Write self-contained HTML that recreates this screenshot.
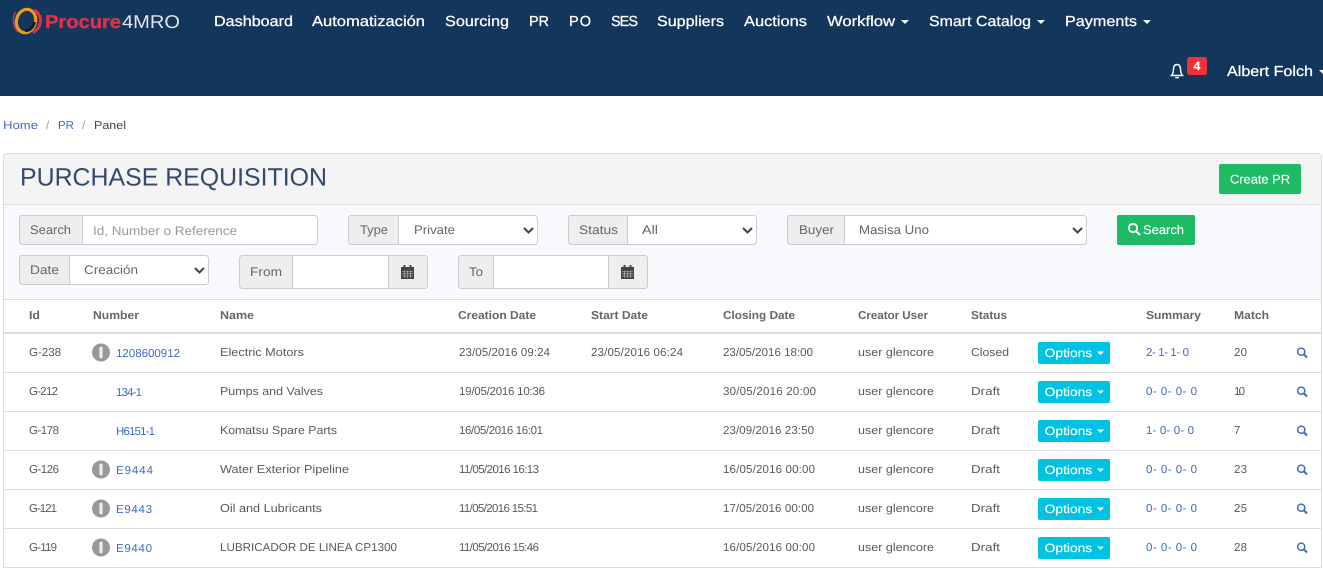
<!DOCTYPE html>
<html lang="en"><head><meta charset="utf-8"><title>Purchase Requisition</title>
<style>
html,body{margin:0;padding:0;background:#fff;width:1323px;height:568px;overflow:hidden}
svg{display:block}
text{font-family:"Liberation Sans",sans-serif;font-size:11.5px;fill:#5a5a5a;text-rendering:geometricPrecision}
.n{font-size:14.5px;fill:#fff;stroke:#fff;stroke-width:.25}
.h{font-weight:bold;fill:#666}
.a{fill:#4169c4}
.f{font-size:12.5px;fill:#666}
.w{fill:#fff;font-size:12.5px;stroke:#fff;stroke-width:.15}
.b{fill:#eee;stroke:#ccc}
.i{fill:#fff;stroke:#ccc}
</style></head><body>
<svg xmlns="http://www.w3.org/2000/svg" width="1323" height="568" viewBox="0 0 1323 568">
<defs>
<g id="mag" fill="none" stroke="#4169c4" stroke-width="1.5"><circle cx="4.2" cy="4.2" r="3.6"/><path d="M7 7L10 10" stroke-width="2"/></g>
<g id="chev" fill="none" stroke="#444" stroke-width="2"><path d="M0 0L4.500 4.500L9 0"/></g>
<g id="cal"><rect x="0" y="2" width="13" height="12" fill="#444"/><rect x="2.500" y="0" width="2" height="3" fill="#444"/><rect x="8.500" y="0" width="2" height="3" fill="#444"/><path d="M1 6.500H12M1 8.800H12M1 11H12M3.500 5.500V13M6.500 5.500V13M9.500 5.500V13" stroke="#bbb" stroke-width=".6"/></g>
<g id="info"><circle cx="0" cy="0" r="9" fill="#999"/><rect x="-1.600" y="-5.800" width="3.200" height="11.600" rx="1" fill="#eee"/></g>
<g id="opt"><rect width="72" height="22" rx="2" fill="#00c3e3"/><text x="6.700" y="15" textLength="47.500" lengthAdjust="spacingAndGlyphs" class="w" style="font-size:12px">Options</text><path d="M59 9.500h7l-3.500 3.500z" fill="#fff"/></g>
</defs>

<!-- top nav -->
<rect width="1323" height="96" fill="#13375c"/>
<g fill="none">
<ellipse cx="26" cy="21" rx="9.500" ry="11.800" stroke="#f09a1a" stroke-width="3.200" transform="rotate(15 26 21)"/>
<path d="M34 10C42.500 14 43 27 33 32.500" stroke="#e0304a" stroke-width="3"/>
<path d="M15.500 12C12 18 13 28 18 32" stroke="#c0354a" stroke-width="1.500"/>
<path d="M25 30.500C30 31 33.500 27 34.500 22" stroke="#0b1c33" stroke-width="3"/>
</g>
<text x="45" y="28" textLength="76" lengthAdjust="spacingAndGlyphs" style="font-size:18.500px;font-weight:bold;fill:#e0304a;stroke:#e0304a;stroke-width:.4">Procure</text>
<text x="122" y="28" textLength="58" lengthAdjust="spacingAndGlyphs" style="font-size:18.500px;fill:#dfe5ec">4MRO</text>

<text class="n" x="214" y="26" textLength="79" lengthAdjust="spacingAndGlyphs">Dashboard</text>
<text class="n" x="312" y="26" textLength="113" lengthAdjust="spacingAndGlyphs">Automatización</text>
<text class="n" x="445" y="26" textLength="64" lengthAdjust="spacingAndGlyphs">Sourcing</text>
<text class="n" x="529" y="26" textLength="20">PR</text>
<text class="n" x="569" y="26" textLength="22">PO</text>
<text class="n" x="611" y="26" textLength="27">SES</text>
<text class="n" x="657" y="26" textLength="67" lengthAdjust="spacingAndGlyphs">Suppliers</text>
<text class="n" x="744" y="26" textLength="63" lengthAdjust="spacingAndGlyphs">Auctions</text>
<text class="n" x="827" y="26" textLength="68" lengthAdjust="spacingAndGlyphs">Workflow</text>
<path d="M901 20h8l-4 4z" fill="#fff"/>
<text class="n" x="929" y="26" textLength="102" lengthAdjust="spacingAndGlyphs">Smart Catalog</text>
<path d="M1037 20h8l-4 4z" fill="#fff"/>
<text class="n" x="1065" y="26" textLength="72" lengthAdjust="spacingAndGlyphs">Payments</text>
<path d="M1143 20h8l-4 4z" fill="#fff"/>

<path d="M1170.500 75.500H1183.500M1172 75C1173.700 72.500 1173.300 70.500 1173.500 68.500C1173.800 65.300 1175.300 64.500 1177 64.500C1178.700 64.500 1180.200 65.300 1180.500 68.500C1180.700 70.500 1180.300 72.500 1182 75M1175.300 77.700H1178.700" fill="none" stroke="#fff" stroke-width="1.400"/>
<rect x="1187" y="57" width="20" height="18" rx="2.500" fill="#ee3238"/>
<text x="1197" y="70" text-anchor="middle" style="font-size:12px;font-weight:bold;fill:#fff;stroke:#fff;stroke-width:.3">4</text>
<text class="n" x="1227" y="76" textLength="86" lengthAdjust="spacingAndGlyphs">Albert Folch</text>
<path d="M1319 70h8l-4 4z" fill="#fff"/>

<!-- breadcrumb -->
<text class="a" x="3" y="129" textLength="35" lengthAdjust="spacingAndGlyphs">Home</text>
<text x="46" y="129" style="fill:#999">/</text>
<text class="a" x="58" y="129" textLength="16" lengthAdjust="spacingAndGlyphs">PR</text>
<text x="82" y="129" style="fill:#999">/</text>
<text x="94" y="129" textLength="32" lengthAdjust="spacingAndGlyphs" style="fill:#444">Panel</text>

<!-- card -->
<path d="M3.500 568V157a3.500 3.500 0 0 1 3.500-3.500H1318a3.500 3.500 0 0 1 3.500 3.500V568" fill="#fff" stroke="#ddd"/>
<path d="M4 204V157a3 3 0 0 1 3-3H1318a3 3 0 0 1 3 3V204z" fill="#f4f4f4"/>
<rect x="4" y="204" width="1317" height="1" fill="#ddd"/>
<rect x="4" y="205" width="1317" height="94" fill="#f8f9fd"/>
<rect x="4" y="299" width="1317" height="1" fill="#ddd"/>
<text x="20" y="185.500" textLength="307" lengthAdjust="spacingAndGlyphs" style="font-size:25px;fill:#34496e">PURCHASE REQUISITION</text>
<rect x="1219" y="164" width="82" height="30" rx="2" fill="#1dbb63"/>
<text class="w" x="1230" y="183.500" textLength="60" lengthAdjust="spacingAndGlyphs">Create PR</text>

<!-- filters row 1 -->
<rect class="i" x="19.500" y="215.500" width="298" height="29" rx="3"/>
<path class="b" d="M82.500 215.500H22.500a3 3 0 0 0-3 3V241.500a3 3 0 0 0 3 3H82.500z"/>
<text class="f" x="30" y="234" textLength="41" lengthAdjust="spacingAndGlyphs">Search</text>
<text class="f" x="93" y="235" textLength="144" lengthAdjust="spacingAndGlyphs" style="fill:#999">Id, Number o Reference</text>

<rect class="i" x="348.500" y="215.500" width="189" height="29" rx="3"/>
<path class="b" d="M398.500 215.500H351.500a3 3 0 0 0-3 3V241.500a3 3 0 0 0 3 3H398.500z"/>
<text class="f" x="360" y="234" textLength="28" lengthAdjust="spacingAndGlyphs">Type</text>
<text class="f" x="414" y="234" textLength="41" lengthAdjust="spacingAndGlyphs">Private</text>
<use href="#chev" x="524" y="228"/>

<rect class="i" x="568.500" y="215.500" width="188" height="29" rx="3"/>
<path class="b" d="M627.500 215.500H571.500a3 3 0 0 0-3 3V241.500a3 3 0 0 0 3 3H627.500z"/>
<text class="f" x="579" y="234" textLength="39" lengthAdjust="spacingAndGlyphs">Status</text>
<text class="f" x="642" y="234" textLength="16" lengthAdjust="spacingAndGlyphs">All</text>
<use href="#chev" x="743" y="228"/>

<rect class="i" x="787.500" y="215.500" width="299" height="29" rx="3"/>
<path class="b" d="M844.500 215.500H790.500a3 3 0 0 0-3 3V241.500a3 3 0 0 0 3 3H844.500z"/>
<text class="f" x="799" y="234" textLength="35" lengthAdjust="spacingAndGlyphs">Buyer</text>
<text class="f" x="859" y="234" textLength="70" lengthAdjust="spacingAndGlyphs">Masisa Uno</text>
<use href="#chev" x="1073" y="228"/>

<rect x="1117" y="215" width="78" height="30" rx="2" fill="#1dbb63"/>
<g fill="none" stroke="#fff"><circle cx="1133" cy="228" r="4.200" stroke-width="1.800"/><path d="M1136 231.200L1140 235" stroke-width="2.200"/></g>
<text class="w" x="1143" y="234" textLength="41" lengthAdjust="spacingAndGlyphs">Search</text>

<!-- filters row 2 -->
<rect class="i" x="19.500" y="255.500" width="189" height="29" rx="3"/>
<path class="b" d="M69.500 255.500H22.500a3 3 0 0 0-3 3V281.500a3 3 0 0 0 3 3H69.500z"/>
<text class="f" x="30" y="274" textLength="29" lengthAdjust="spacingAndGlyphs">Date</text>
<text class="f" x="84" y="274" textLength="54" lengthAdjust="spacingAndGlyphs">Creación</text>
<use href="#chev" x="195" y="268"/>

<rect class="b" x="239.500" y="255.500" width="188" height="33" rx="3"/>
<rect class="i" x="292.500" y="255.500" width="96" height="33"/>
<text class="f" x="250" y="276" textLength="32" lengthAdjust="spacingAndGlyphs">From</text>
<use href="#cal" x="401" y="265"/>

<rect class="b" x="458.500" y="255.500" width="189" height="33" rx="3"/>
<rect class="i" x="493.500" y="255.500" width="115" height="33"/>
<text class="f" x="469" y="276" textLength="14" lengthAdjust="spacingAndGlyphs">To</text>
<use href="#cal" x="621" y="265"/>

<!-- table head -->
<g>
<text class="h" x="29" y="319" textLength="11" lengthAdjust="spacingAndGlyphs">Id</text>
<text class="h" x="93" y="319" textLength="46" lengthAdjust="spacingAndGlyphs">Number</text>
<text class="h" x="220" y="319" textLength="34" lengthAdjust="spacingAndGlyphs">Name</text>
<text class="h" x="458" y="319" textLength="78" lengthAdjust="spacingAndGlyphs">Creation Date</text>
<text class="h" x="591" y="319" textLength="57" lengthAdjust="spacingAndGlyphs">Start Date</text>
<text class="h" x="723" y="319" textLength="72" lengthAdjust="spacingAndGlyphs">Closing Date</text>
<text class="h" x="858" y="319" textLength="70" lengthAdjust="spacingAndGlyphs">Creator User</text>
<text class="h" x="971" y="319" textLength="36" lengthAdjust="spacingAndGlyphs">Status</text>
<text class="h" x="1146" y="319" textLength="55" lengthAdjust="spacingAndGlyphs">Summary</text>
<text class="h" x="1234" y="319" textLength="35" lengthAdjust="spacingAndGlyphs">Match</text>
</g>
<rect x="4" y="332" width="1317" height="2" fill="#ddd"/>
<rect x="4" y="372" width="1317" height="1" fill="#ddd"/>
<rect x="4" y="411" width="1317" height="1" fill="#ddd"/>
<rect x="4" y="450" width="1317" height="1" fill="#ddd"/>
<rect x="4" y="489" width="1317" height="1" fill="#ddd"/>
<rect x="4" y="528" width="1317" height="1" fill="#ddd"/>
<rect x="4" y="567" width="1317" height="1" fill="#ddd"/>

<!-- row 1 -->
<text x="29" y="356" textLength="32">G-238</text>
<use href="#info" x="101" y="352.500"/>
<text class="a" x="116" y="357" textLength="64">1208600912</text>
<text x="220" y="356" textLength="84" lengthAdjust="spacingAndGlyphs">Electric Motors</text>
<text x="459" y="356" textLength="91">23/05/2016 09:24</text>
<text x="591" y="356" textLength="92">23/05/2016 06:24</text>
<text x="723" y="356" textLength="90">23/05/2016 18:00</text>
<text x="858" y="356" textLength="76" lengthAdjust="spacingAndGlyphs">user glencore</text>
<text x="971" y="356" textLength="38" lengthAdjust="spacingAndGlyphs">Closed</text>
<use href="#opt" x="1038" y="342"/>
<text class="a" x="1146" y="356" textLength="43">2- 1- 1- 0</text>
<text x="1234" y="356" textLength="13">20</text>
<use href="#mag" x="1297" y="347.500"/>

<!-- row 2 -->
<text x="29" y="395" textLength="29">G-212</text>
<text class="a" x="116" y="396" textLength="26">134-1</text>
<text x="220" y="395" textLength="103" lengthAdjust="spacingAndGlyphs">Pumps and Valves</text>
<text x="459" y="395" textLength="86">19/05/2016 10:36</text>
<text x="723" y="395" textLength="93">30/05/2016 20:00</text>
<text x="858" y="395" textLength="76" lengthAdjust="spacingAndGlyphs">user glencore</text>
<text x="971" y="395" textLength="29" lengthAdjust="spacingAndGlyphs">Draft</text>
<use href="#opt" x="1038" y="381"/>
<text class="a" x="1146" y="395" textLength="51">0- 0- 0- 0</text>
<text x="1234" y="395" textLength="11">10</text>
<use href="#mag" x="1297" y="386.500"/>

<!-- row 3 -->
<text x="29" y="434" textLength="30">G-178</text>
<text class="a" x="116" y="435" textLength="39">H6151-1</text>
<text x="220" y="434" textLength="117" lengthAdjust="spacingAndGlyphs">Komatsu Spare Parts</text>
<text x="459" y="434" textLength="84">16/05/2016 16:01</text>
<text x="723" y="434" textLength="91">23/09/2016 23:50</text>
<text x="858" y="434" textLength="76" lengthAdjust="spacingAndGlyphs">user glencore</text>
<text x="971" y="434" textLength="29" lengthAdjust="spacingAndGlyphs">Draft</text>
<use href="#opt" x="1038" y="420"/>
<text class="a" x="1146" y="434" textLength="48">1- 0- 0- 0</text>
<text x="1234" y="434" textLength="6">7</text>
<use href="#mag" x="1297" y="425.500"/>

<!-- row 4 -->
<text x="29" y="473" textLength="30">G-126</text>
<use href="#info" x="101" y="469.500"/>
<text class="a" x="116" y="474" textLength="37">E9444</text>
<text x="220" y="473" textLength="129" lengthAdjust="spacingAndGlyphs">Water Exterior Pipeline</text>
<text x="459" y="473" textLength="80">11/05/2016 16:13</text>
<text x="723" y="473" textLength="92">16/05/2016 00:00</text>
<text x="858" y="473" textLength="76" lengthAdjust="spacingAndGlyphs">user glencore</text>
<text x="971" y="473" textLength="29" lengthAdjust="spacingAndGlyphs">Draft</text>
<use href="#opt" x="1038" y="459"/>
<text class="a" x="1146" y="473" textLength="51">0- 0- 0- 0</text>
<text x="1234" y="473" textLength="13">23</text>
<use href="#mag" x="1297" y="464.500"/>

<!-- row 5 -->
<text x="29" y="512" textLength="28">G-121</text>
<use href="#info" x="101" y="508.500"/>
<text class="a" x="116" y="513" textLength="36">E9443</text>
<text x="220" y="512" textLength="102" lengthAdjust="spacingAndGlyphs">Oil and Lubricants</text>
<text x="459" y="512" textLength="79">11/05/2016 15:51</text>
<text x="723" y="512" textLength="91">17/05/2016 00:00</text>
<text x="858" y="512" textLength="76" lengthAdjust="spacingAndGlyphs">user glencore</text>
<text x="971" y="512" textLength="29" lengthAdjust="spacingAndGlyphs">Draft</text>
<use href="#opt" x="1038" y="498"/>
<text class="a" x="1146" y="512" textLength="51">0- 0- 0- 0</text>
<text x="1234" y="512" textLength="13">25</text>
<use href="#mag" x="1297" y="503.500"/>

<!-- row 6 -->
<text x="29" y="551" textLength="28">G-119</text>
<use href="#info" x="101" y="547.500"/>
<text class="a" x="116" y="552" textLength="36">E9440</text>
<text x="220" y="551" textLength="177" lengthAdjust="spacingAndGlyphs">LUBRICADOR DE LINEA CP1300</text>
<text x="459" y="551" textLength="80">11/05/2016 15:46</text>
<text x="723" y="551" textLength="92">16/05/2016 00:00</text>
<text x="858" y="551" textLength="76" lengthAdjust="spacingAndGlyphs">user glencore</text>
<text x="971" y="551" textLength="29" lengthAdjust="spacingAndGlyphs">Draft</text>
<use href="#opt" x="1038" y="537"/>
<text class="a" x="1146" y="551" textLength="51">0- 0- 0- 0</text>
<text x="1234" y="551" textLength="13">28</text>
<use href="#mag" x="1297" y="542.500"/>
</svg>
</body></html>
